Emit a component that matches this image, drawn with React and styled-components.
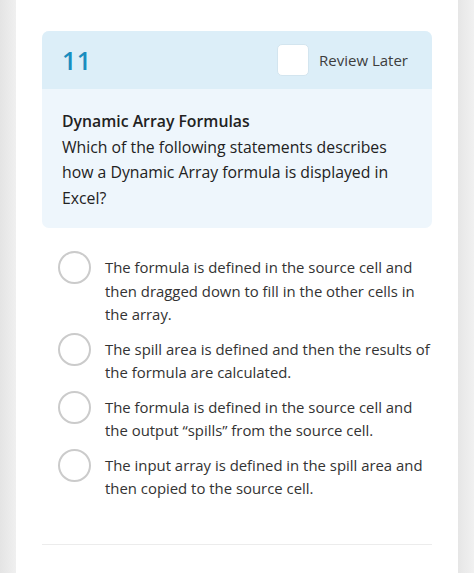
import React, {useState} from 'react';
import styled, {createGlobalStyle} from "styled-components";

const GlobalStyle = createGlobalStyle`
  html, body {
    margin: 0;
    padding: 0;
    background: #ececec;
  }
  body {
    font-family: "Open Sans", "Noto Sans", sans-serif;
  }
`

const Page = styled.div`
  min-height: 573px;
  display: flex;
  justify-content: center;
  background: linear-gradient(to right, #e4e4e4 0, #f0f0f0 16px, #fff 16px, #fff 458px, #e6e6e6 458px, #f1f1f1 474px);
`

const Sheet = styled.div`
  width: 442px;
  background: #FFFFFF;
  padding: 31px 26px 0;
  box-sizing: border-box;
`

const QuestionCard = styled.div`
  border-radius: 7px;
  overflow: hidden;
  background: #EEF6FC;
`

const CardHeader = styled.div`
  height: 58px;
  background: #DCEEF8;
  display: flex;
  align-items: center;
  justify-content: space-between;
  padding: 0 24px 0 20px;
`

const QuestionNumber = styled.div`
  font-size: 25px;
  font-weight: 600;
  color: #1A8DBF;
  letter-spacing: 0.5px;
`

const ReviewLater = styled.label`
  display: flex;
  align-items: center;
  gap: 10px;
  font-size: 15px;
  color: #3d3d3d;
  cursor: pointer;
`

const CheckBox = styled.span`
  width: 30px;
  height: 30px;
  border-radius: 5px;
  background: #FFFFFF;
  border: 1px solid #d3e5ef;
  display: flex;
  align-items: center;
  justify-content: center;
  color: #1A8DBF;
  font-size: 18px;
`

const CardBody = styled.div`
  padding: 20px 20px 17px;
  color: #222;
  font-size: 15.8px;
  line-height: 25.5px;
`

const CardTitle = styled.div`
  font-weight: 600;
`

const Options = styled.div`
  padding: 28px 0 0 16px;
  display: flex;
  flex-direction: column;
  gap: 11px;
`

const Option = styled.div`
  display: flex;
  align-items: flex-start;
  gap: 14px;
  cursor: pointer;
`

const Radio = styled.span`
  flex: none;
  width: 29px;
  height: 29px;
  border-radius: 50%;
  border: 2px solid ${props => (props.$checked ? "#1A8DBF" : "#cbcbcb")};
  background: #fff;
  margin-top: -5px;
  display: flex;
  align-items: center;
  justify-content: center;

  &::after {
    content: "";
    width: 15px;
    height: 15px;
    border-radius: 50%;
    background: #1A8DBF;
    display: ${props => (props.$checked ? "block" : "none")};
  }
`

const OptionText = styled.div`
  font-size: 14.9px;
  line-height: 23.5px;
  color: #333;
`

const Divider = styled.hr`
  border: none;
  border-top: 1px solid #ececec;
  margin: 43px 0 0;
`

const answers = [
  "The formula is defined in the source cell and then dragged down to fill in the other cells in the array.",
  "The spill area is defined and then the results of the formula are calculated.",
  "The formula is defined in the source cell and the output \u201Cspills\u201D from the source cell.",
  "The input array is defined in the spill area and then copied to the source cell.",
];

export default function App() {
  const [review, setReview] = useState(false);
  const [selected, setSelected] = useState(null);

  return (
    <Page>
      <GlobalStyle/>
      <Sheet>
        <QuestionCard>
          <CardHeader>
            <QuestionNumber>11</QuestionNumber>
            <ReviewLater onClick={() => setReview(!review)}>
              <CheckBox>{review ? "\u2713" : ""}</CheckBox>
              Review Later
            </ReviewLater>
          </CardHeader>
          <CardBody>
            <CardTitle>Dynamic Array Formulas</CardTitle>
            Which of the following statements describes how a Dynamic Array formula is displayed in Excel?
          </CardBody>
        </QuestionCard>
        <Options>
          {answers.map((text, i) => (
            <Option key={i} onClick={() => setSelected(i)}>
              <Radio $checked={selected === i}/>
              <OptionText>{text}</OptionText>
            </Option>
          ))}
        </Options>
        <Divider/>
      </Sheet>
    </Page>
  );
}
